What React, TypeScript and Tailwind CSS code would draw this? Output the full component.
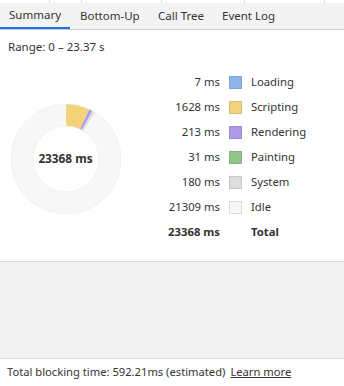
import React from "react";

type Row = { ms: number; label: string; color: string };

const rows: Row[] = [
  { ms: 7, label: "Loading", color: "#8fb4ea" },
  { ms: 1628, label: "Scripting", color: "#f3d27c" },
  { ms: 213, label: "Rendering", color: "#ae9ae9" },
  { ms: 31, label: "Painting", color: "#93c48c" },
  { ms: 180, label: "System", color: "#dedede" },
  { ms: 21309, label: "Idle", color: "#f7f7f7" },
];

const total = 23368;

function Donut() {
  const cx = 55;
  const cy = 55;
  const r = 44;
  const c = 2 * Math.PI * r;
  let acc = 0;
  return (
    <div className="relative w-[110px] h-[110px]">
      <svg width="110" height="110" viewBox="0 0 110 110">
        <g transform="rotate(-90 55 55)">
          {rows.map((row) => {
            const len = (row.ms / total) * c;
            const el = (
              <circle
                key={row.label}
                cx={cx}
                cy={cy}
                r={r}
                fill="none"
                stroke={row.color}
                strokeWidth={22}
                strokeDasharray={`${len} ${c - len}`}
                strokeDashoffset={-acc}
              />
            );
            acc += len;
            return el;
          })}
        </g>
        <circle cx={cx} cy={cy} r={55} fill="none" stroke="#ececec" strokeWidth={0.6} />
        <circle cx={cx} cy={cy} r={33} fill="none" stroke="#ececec" strokeWidth={0.6} />
      </svg>
      <div className="absolute inset-0 flex items-center justify-center text-[11.8px] font-bold text-[#333]">
        23368 ms
      </div>
    </div>
  );
}

export default function App() {
  const font = { fontFamily: '"Noto Sans", "Open Sans", sans-serif' };
  return (
    <div className="w-[344px] h-[386px] bg-white flex flex-col text-[#333] overflow-hidden" style={font}>
      {/* strip from panel above */}
      <div className="h-[3px] flex bg-white">
        <div className="w-[50px] border-r border-[#e0e0e0]" />
        <div className="w-[32px] border-r border-[#e0e0e0]" />
        <div className="w-[80px] border-r border-[#e0e0e0]" />
        <div className="w-[83px] border-r border-[#e0e0e0]" />
        <div className="w-[80px] border-r border-[#e0e0e0]" />
      </div>

      {/* Tabs */}
      <div className="h-[27px] bg-[#f3f3f3] border-b border-[#cdcdcd] flex text-[11.5px]">
        <div className="w-[70px] flex items-center justify-center border-b-2 border-[#1a73e8]">
          Summary
        </div>
        <div className="w-[78px] pl-[10px] flex items-center">Bottom-Up</div>
        <div className="w-[64px] pl-[10px] flex items-center">Call Tree</div>
        <div className="pl-[10px] flex items-center">Event Log</div>
      </div>

      {/* Summary */}
      <div className="h-[231px] flex flex-col">
        <div className="px-[8px] pt-[8px] text-[11.5px]">Range: 0 – 23.37 s</div>
        <div className="flex pt-[8px]">
          <div className="w-[130px] flex items-center justify-center pl-[1px] pt-[10px]">
            <Donut />
          </div>
          <div className="flex flex-col text-[11.3px] mt-[7px]">
            {rows.map((row) => (
              <div key={row.label} className="h-[25px] flex items-center">
                <div className="w-[90px] text-right">{row.ms} ms</div>
                <div
                  className="ml-[9px] w-[13px] h-[13px] border border-black/10"
                  style={{ backgroundColor: row.color }}
                />
                <div className="ml-[9px]">{row.label}</div>
              </div>
            ))}
            <div className="h-[25px] flex items-center font-bold">
              <div className="w-[90px] text-right">{total} ms</div>
              <div className="ml-[31px]">Total</div>
            </div>
          </div>
        </div>
      </div>

      {/* Empty area */}
      <div className="flex-1 bg-[#f2f2f2] border-t border-[#d6d6d6]" />

      {/* Footer */}
      <div className="h-[28px] bg-white border-t border-[#d6d6d6] flex items-center px-[7px] text-[11.2px] gap-[5px]">
        <span>Total blocking time: 592.21ms (estimated)</span>
        <span className="underline">Learn more</span>
      </div>
    </div>
  );
}
